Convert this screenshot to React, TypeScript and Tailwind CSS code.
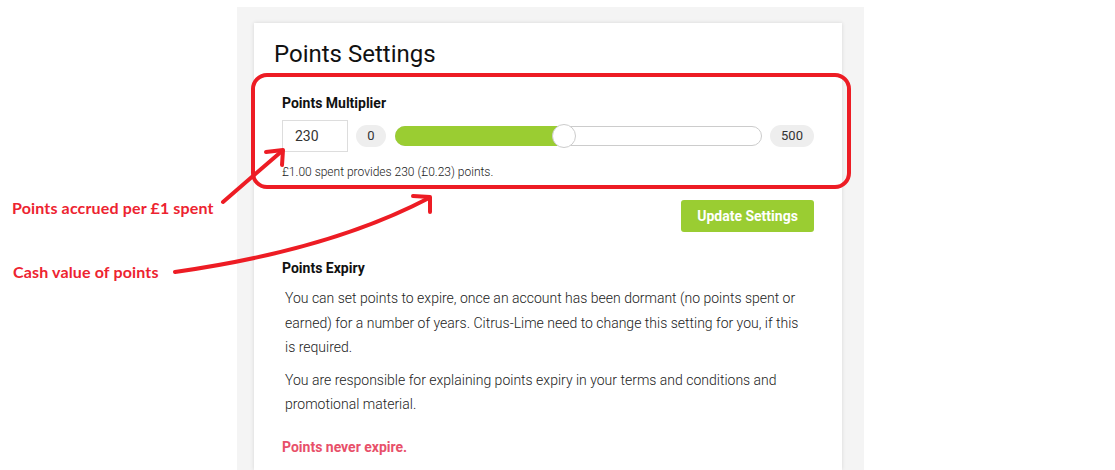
const multiplier = 230
const max = 500

function Annotations() {
  return (
    <>
      <div className="pointer-events-none absolute left-[251px] top-[73px] h-[116px] w-[600px] rounded-[16px] border-4 border-[#ed1c24]" />
      <svg className="pointer-events-none absolute left-0 top-0" width="1115" height="470">
        <g stroke="#ed1c24" strokeWidth="4" fill="none" strokeLinecap="round" strokeLinejoin="round">
          <path d="M223 202 L282 151" />
          <path d="M266 152 L283 150 L282 165" />
          <path d="M175 272 Q 330 250 429 198" />
          <path d="M413 196 L430 197 L430 212" />
        </g>
      </svg>
      <p className="absolute left-[12px] top-[198px] font-['Lato',sans-serif] text-[16px] font-bold leading-[20px] tracking-[0.15px] text-[#ed2330]">
        Points accrued per £1 spent
      </p>
      <p className="absolute left-[13px] top-[262px] font-['Lato',sans-serif] text-[16px] font-bold leading-[20px] tracking-[0.15px] text-[#ed2330]">
        Cash value of points
      </p>
    </>
  )
}

function MultiplierSlider() {
  const pct = (multiplier / max) * 100
  return (
    <div className="flex h-8 items-center">
      <div className="flex h-8 w-[66px] items-center border border-[#dddddd] pl-[12px] text-[14px] text-[#333]">
        {multiplier}
      </div>
      <span className="ml-2 flex h-[22px] w-[30px] items-center justify-center rounded-full bg-[#eeeeee] text-[13px] text-[#333]">
        0
      </span>
      <div className="relative ml-[9px] h-5 flex-1 rounded-full border border-[#cccccc] bg-white">
        <div className="absolute inset-y-[-1px] left-[-1px] rounded-l-full bg-[#9acd32]" style={{ width: `${pct}%` }} />
        <div
          className="absolute top-1/2 h-6 w-6 -translate-x-1/2 -translate-y-1/2 rounded-full border border-[#cccccc] bg-white"
          style={{ left: `${pct}%` }}
        />
      </div>
      <span className="ml-2 flex h-[22px] w-[44px] items-center justify-center rounded-full bg-[#eeeeee] text-[13px] text-[#333]">
        {max}
      </span>
    </div>
  )
}

export default function App() {
  return (
    <div className="relative h-[470px] w-[1115px] overflow-hidden bg-white font-['Roboto',sans-serif]">
      <div className="ml-[237px] mt-[7px] h-[463px] w-[627px] bg-[#f4f4f4] pl-[17px] pt-[16px]">
        <div className="h-full w-[588px] bg-white px-5 pt-[17px] shadow-[0_0_4px_rgba(0,0,0,0.12)]">
          <h1 className="text-[24px] leading-[28px] text-[#111]">Points Settings</h1>

          <div className="px-2">
            <h2 className="mt-6 pt-px text-[14px] font-bold leading-5 text-[#111]">Points Multiplier</h2>
            <div className="mt-[7px]">
              <MultiplierSlider />
            </div>
            <p className="mt-3 text-[12px] font-light leading-4 text-[#222]">
              £1.00 spent provides {multiplier} (£{(multiplier / 1000).toFixed(2)}) points.
            </p>
            <div className="mt-5 flex justify-end">
              <button className="h-8 w-[133px] rounded-[3px] bg-[#9acd32] text-[14px] font-bold text-white">
                Update Settings
              </button>
            </div>

            <h2 className="mt-[26px] text-[14px] font-bold leading-5 text-[#111]">Points Expiry</h2>
            <div className="mt-2 pl-[3px] pr-[10px] text-[14px] font-light leading-[24.5px] text-[#222]">
              <p className="mb-2">
                You can set points to expire, once an account has been dormant (no points spent or earned) for a
                number of years. Citrus-Lime need to change this setting for you, if this is required.
              </p>
              <p>
                You are responsible for explaining points expiry in your terms and conditions and promotional
                material.
              </p>
            </div>
            <p className="mt-5 text-[14px] font-bold leading-5 text-[#e8506a]">Points never expire.</p>
          </div>
        </div>
      </div>
      <Annotations />
    </div>
  )
}
